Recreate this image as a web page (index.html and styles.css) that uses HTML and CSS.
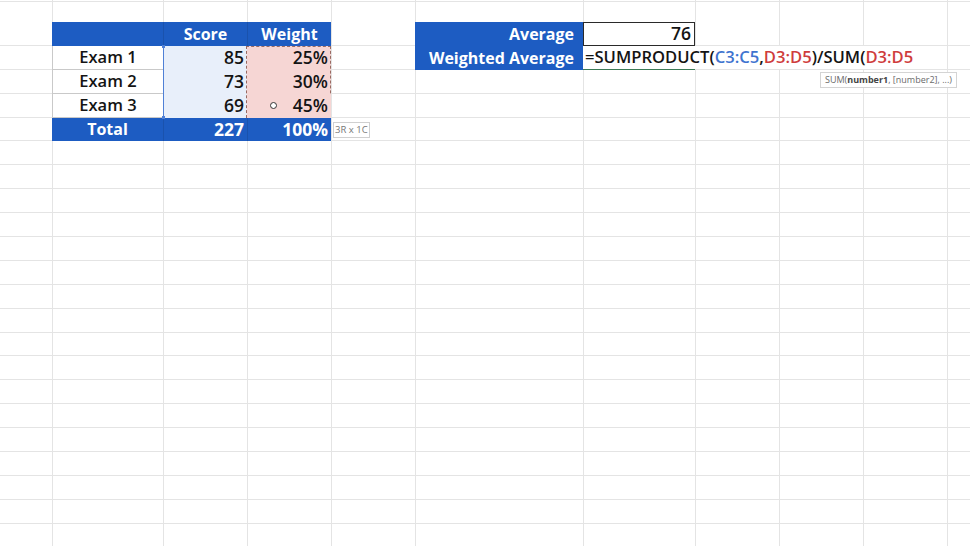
FILE: index.html
```html
<!DOCTYPE html>
<html>
<head>
<meta charset="utf-8">
<link rel="stylesheet" href="styles.css">
</head>
<body>
<div class="sheet">
  <div class="vline col-b"></div>
  <div class="vline col-c"></div>
  <div class="vline col-d"></div>
  <div class="vline col-e"></div>
  <div class="vline col-f"></div>
  <div class="vline col-g"></div>
  <div class="vline col-h"></div>
  <div class="vline col-i"></div>
  <div class="vline col-j"></div>
  <div class="vline col-k"></div>

  <div class="cell blue col-b r2"></div>
  <div class="cell blue sep center col-c r2">Score</div>
  <div class="cell blue sep center col-d r2">Weight</div>

  <div class="cell label center col-b r3">Exam 1</div>
  <div class="cell num sel-c col-c r3">85</div>
  <div class="cell num sel-d col-d r3">25%</div>

  <div class="cell label center col-b r4">Exam 2</div>
  <div class="cell num sel-c col-c r4">73</div>
  <div class="cell num sel-d col-d r4">30%</div>

  <div class="cell label center col-b r5">Exam 3</div>
  <div class="cell num sel-c col-c r5">69</div>
  <div class="cell num sel-d cursor-cell col-d r5"><span class="cursor"></span>45%</div>

  <div class="cell blue center col-b r6">Total</div>
  <div class="cell blue sep num col-c r6">227</div>
  <div class="cell blue sep num col-d r6">100%</div>

  <div class="range-c"><span class="handle tl"></span><span class="handle bl"></span></div>
  <div class="range-d"></div>
  <div class="size-tip">3R x 1C</div>

  <div class="cell blue right label-right col-f r2">Average</div>
  <div class="cell value-box num col-g r2">76</div>
  <div class="cell blue right label-right col-f r3">Weighted Average</div>
  <div class="cell editor col-g r3"><span class="formula">=SUMPRODUCT(<span class="ref-c">C3:C5</span>,<span class="ref-d">D3:D5</span>)/SUM(<span class="ref-d">D3:D5</span></span></div>

  <div class="fn-tip">SUM(<b>number1</b>, [number2], ...)</div>
</div>
</body>
</html>
```
FILE: styles.css
```css
html, body {
  margin: 0;
  padding: 0;
  background: #ffffff;
}

body {
  font-family: "Open Sans", "Liberation Sans", sans-serif;
  color: #141414;
}

.sheet {
  width: 970px;
  height: 546px;
  overflow: hidden;
  display: grid;
  grid-template-columns: 52px 111px 84px 84px 84px 168px 112px 84px 84px 84px 23px;
  grid-template-rows: 22px repeat(22, 23.89px);
  background-image: repeating-linear-gradient(180deg, transparent 0 22.89px, #e4e4e4 22.89px 23.89px);
  background-position: 0 22px;
}

.vline {
  grid-row: 1 / -1;
  border-left: 1px solid #e4e4e4;
}

.col-b { grid-column: 2; }
.col-c { grid-column: 3; }
.col-d { grid-column: 4; }
.col-e { grid-column: 5; }
.col-f { grid-column: 6; }
.col-g { grid-column: 7; }
.col-h { grid-column: 8; }
.col-i { grid-column: 9; }
.col-j { grid-column: 10; }
.col-k { grid-column: 11; }

.r2 { grid-row: 2; }
.r3 { grid-row: 3; }
.r4 { grid-row: 4; }
.r5 { grid-row: 5; }
.r6 { grid-row: 6; }

.cell {
  display: flex;
  align-items: center;
  font-size: 16px;
  font-weight: 600;
  white-space: nowrap;
  box-sizing: border-box;
  line-height: 1;
}

.center { justify-content: center; }
.right { justify-content: flex-end; padding-right: 3px; }
.label-right { padding-right: 9px; }

.blue {
  background: #1d5cc2;
  color: #ffffff;
  font-weight: 700;
}

.sep {
  border-left: 1px solid #1a52ad;
}

.label {
  background: #ffffff;
  border-left: 1px solid #c9c9c9;
  border-bottom: 1px solid #c9c9c9;
  font-size: 16.5px;
}

.num {
  justify-content: flex-end;
  padding-right: 3px;
  font-size: 17.5px;
}

.sel-c { background: #e8effa; }
.sel-d { background: #f6d6d4; }

.cursor-cell { position: relative; }

.cursor {
  position: absolute;
  left: 23px;
  top: 8px;
  width: 5px;
  height: 5px;
  border: 1px solid #333;
  border-radius: 50%;
  background: #fff;
}

.range-c {
  grid-column: 3;
  grid-row: 3 / 6;
  border-left: 1.5px solid #4f80d6;
  position: relative;
}

.handle {
  position: absolute;
  width: 3px;
  height: 3px;
  background: #4f80d6;
  left: -2px;
}
.handle.tl { top: -1px; }
.handle.bl { bottom: -1px; }

.range-d {
  grid-column: 4;
  grid-row: 3 / 6;
  border: 1.5px dashed #9a6a62;
  margin-left: -1px;
}

.size-tip {
  grid-column: 5;
  grid-row: 6;
  align-self: start;
  justify-self: start;
  margin-top: 4px;
  margin-left: 2px;
  font-family: "Open Sans", sans-serif;
  font-size: 9.5px;
  color: #777;
  border: 1px solid #d0d0d0;
  background: #fff;
  padding: 1px 1px;
  line-height: 12px;
}

.value-box {
  background: #fff;
  border: 1px solid #2a2a2a;
  padding-right: 3px;
}

.editor {
  overflow: visible;
  border-bottom: 1.5px solid #3c7a56;
}

.formula {
  background: #fff;
  padding: 3px 4px 3px 2px;
  color: #141414;
  font-size: 16.6px;
}

.ref-c { color: #3f74cf; }
.ref-d { color: #cf3d3d; }

.fn-tip {
  grid-column: 9 / 12;
  grid-row: 4;
  align-self: start;
  justify-self: start;
  margin-top: 2px;
  margin-left: 41px;
  font-family: "Open Sans", sans-serif;
  font-size: 9px;
  color: #6a6a6a;
  background: #fff;
  border: 1px solid #d4d4d4;
  padding: 2px 4px;
  line-height: 10px;
  white-space: nowrap;
}

.fn-tip b { color: #444; }
```
